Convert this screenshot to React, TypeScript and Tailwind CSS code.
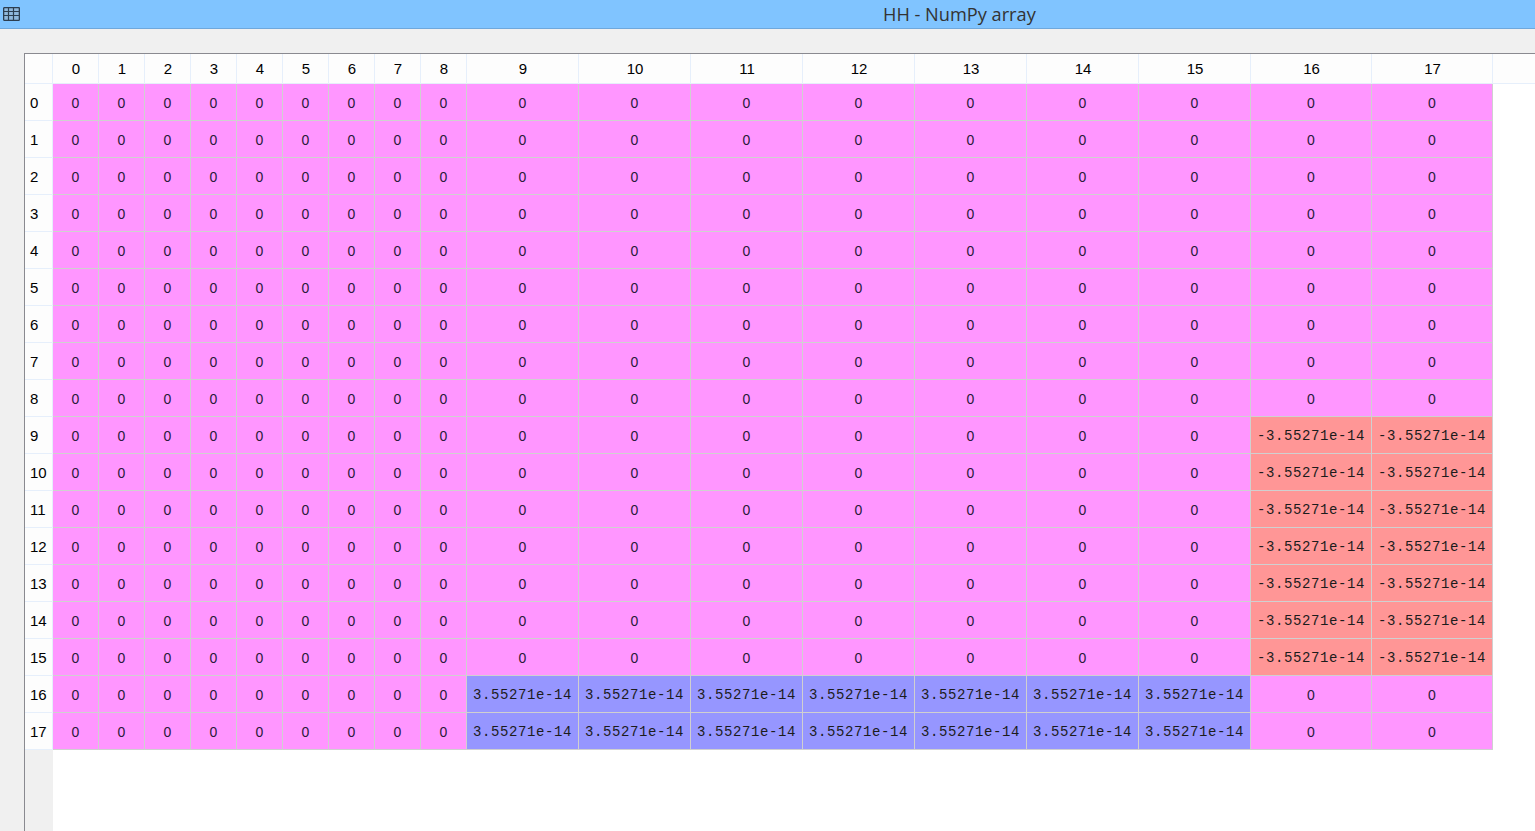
import React from 'react';

// column widths come from the reference: 9 narrow, 7 medium, 2 wide
const columns = Array.from({ length: 18 }, (_, i) => i);
const rows = Array.from({ length: 18 }, (_, i) => i);

const NEG = '-3.55271e-14';
const POS = '3.55271e-14';

// Value for a cell of the array
const cellValue = (r: number, c: number): string => {
  if (r >= 9 && r <= 15 && c >= 16) return NEG;
  if (r >= 16 && c >= 9 && c <= 15) return POS;
  return '0';
};

const cellClass = (value: string): string => {
  if (value === NEG) return "bg-[#ff9696] font-['Liberation_Mono',monospace] text-[14px] tracking-[0.6px] text-[#1c1c1c]";
  if (value === POS) return "bg-[#9696ff] font-['Liberation_Mono',monospace] text-[14px] tracking-[0.6px] text-[#1c1c1c]";
  // plain zero, the mono face draws it with a dot
  return "bg-[#ff96ff] font-['Liberation_Sans',sans-serif] text-[14px] text-[#2a1a3a]";
};

const TableIcon: React.FC = () => (
  <svg width="17" height="14" viewBox="0 0 17 14" fill="none" stroke="#2c3e50" strokeWidth="1.2">
    <rect x="0.6" y="0.6" width="15.8" height="12.8" rx="1" fill="#8fb8dc" strokeWidth="1.4" />
    <path d="M0.5 4.5h16M0.5 8.5h16M5.5 0.5v13M10.5 0.5v13" />
  </svg>
);

const App: React.FC = () => {
  return (
    <div className="flex h-[831px] w-[1535px] flex-col overflow-hidden bg-[#f0f0f0] font-['Liberation_Sans',sans-serif]">
      {/* Title bar */}
      <div className="flex h-[29px] shrink-0 items-center border-b border-[#6fa8dc] bg-[#80c4ff]">
        <div className="ml-[3px] mt-[-1px] flex">
          <TableIcon />
        </div>
        <span className="ml-[863px] mt-[2px] font-['Open_Sans',sans-serif] text-[18.2px] text-[#333]">HH - NumPy array</span>
      </div>

      {/* Array editor */}
      <div className="flex min-h-0 flex-1 flex-col pl-[24px] pt-[24px]">
        <div className="flex min-h-0 flex-1 flex-col border-l border-t border-[#8a8a90] bg-white">
          <div className="grid grid-cols-[28px_repeat(9,46px)_repeat(7,112px)_121px_121px_1fr] grid-rows-[30px_repeat(18,37px)]">
            <div className="border-b border-r border-[#e6effb] bg-[#fdfdfd]" />
            {columns.map((c) => (
              <div
                key={c}
                className="flex items-center justify-center border-b border-r border-[#e6effb] bg-[#fdfdfd] pl-[1px] pt-[2px] text-[15px] text-black"
              >
                {c}
              </div>
            ))}
            <div className="border-b border-[#e6effb] bg-[#fdfdfd]" />

            {rows.map((r) => (
              <React.Fragment key={r}>
                <div className="flex items-center border-b border-r border-[#e6effb] bg-[#fdfdfd] pl-[5px] pt-[2px] text-[15px] text-black">
                  {r}
                </div>
                {columns.map((c) => {
                  const value = cellValue(r, c);
                  return (
                    <div
                      key={c}
                      className={`flex items-center justify-center border-b border-r border-[#d0d0d0] pt-[2px] ${cellClass(value)}`}
                    >
                      {value}
                    </div>
                  );
                })}
                <div className="bg-white" />
              </React.Fragment>
            ))}
          </div>
          {/* Empty area under the table */}
          <div className="flex min-h-0 flex-1">
            <div className="w-[28px] bg-[#f0f0f0]" />
            <div className="flex-1 bg-white" />
          </div>
        </div>
      </div>
    </div>
  );
};

export default App;
